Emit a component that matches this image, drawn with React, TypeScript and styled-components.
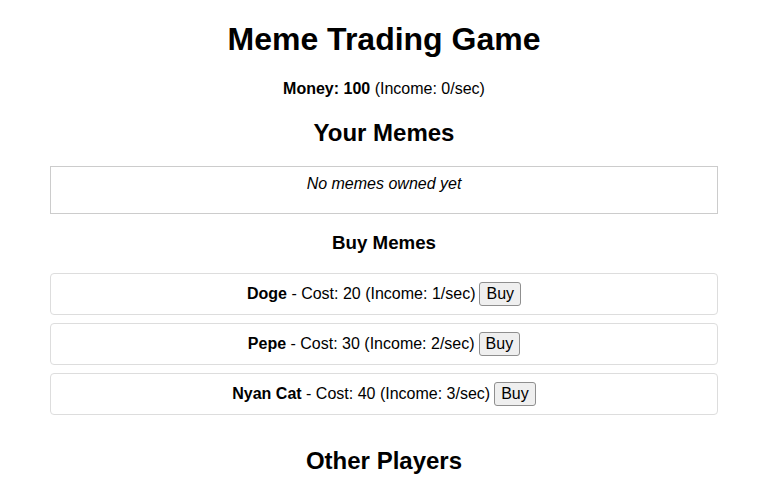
import React from 'react';
import styled, { createGlobalStyle } from 'styled-components';

const GlobalStyle = createGlobalStyle`
	body {
		margin: 0;
		padding: 0 50px;
		font-family: 'Liberation Sans', Arial, sans-serif;
		color: #000;
		background: #fff;
	}
`;

const Game = styled.div`
	text-align: center;
`;

const Title = styled.h1`
	font-size: 32px;
	margin: 21px 0 22px;
`;

const Stats = styled.p`
	font-size: 16px;
	margin: 17px 0 16px;
`;

const SectionTitle = styled.h2<{ $gapTop?: number }>`
	font-size: 24px;
	margin: ${(p) => p.$gapTop ?? 21}px 0 19px;
`;

const SubTitle = styled.h3`
	font-size: 18.72px;
	margin: 18px 0 19px;
`;

const OwnedBox = styled.div`
	border: 1px solid #ccc;
	padding: 8px 10px 20px;
	font-style: italic;
	line-height: 18px;
`;

const ShopItem = styled.div`
	border: 1px solid #ddd;
	border-radius: 4px;
	padding: 8px 10px;
	margin-bottom: 8px;
	line-height: 23px;
`;

const BuyButton = styled.button`
	font-family: 'Liberation Sans', Arial, sans-serif;
	font-size: 16px;
	line-height: 18px;
	padding: 2px 6px;
	margin-left: 4px;
	background: #efefef;
	border: 1px solid #8f8f8f;
	border-radius: 3px;
	color: #000;
	vertical-align: baseline;
`;

const memes = [
	{ name: 'Doge', cost: 20, income: 1 },
	{ name: 'Pepe', cost: 30, income: 2 },
	{ name: 'Nyan Cat', cost: 40, income: 3 },
];

export default function App() {
	return (
		<Game>
			<GlobalStyle />
			<Title>Meme Trading Game</Title>
			<Stats>
				<b>Money: 100</b> (Income: 0/sec)
			</Stats>
			<SectionTitle>Your Memes</SectionTitle>
			<OwnedBox>No memes owned yet</OwnedBox>
			<SubTitle>Buy Memes</SubTitle>
			{memes.map((m) => (
				<ShopItem key={m.name}>
					<b>{m.name}</b> - Cost: {m.cost} (Income: {m.income}/sec)
					<BuyButton>Buy</BuyButton>
				</ShopItem>
			))}
			<SectionTitle $gapTop={32}>Other Players</SectionTitle>
		</Game>
	);
}
